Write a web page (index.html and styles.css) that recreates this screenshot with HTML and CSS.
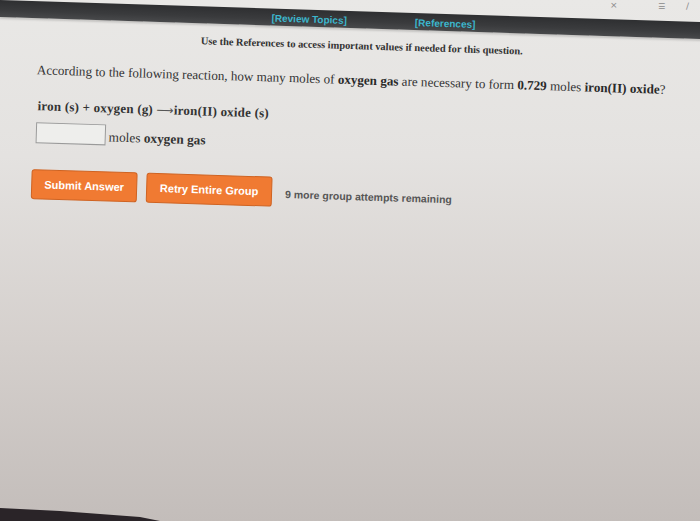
FILE: index.html
```html
<!DOCTYPE html>
<html>
<head>
<meta charset="utf-8">
<link rel="stylesheet" href="styles.css">
</head>
<body>
<div class="toolbar">
  <span class="tb-icon tb-a">&#x2A2F;</span>
  <span class="tb-icon tb-b">&#x2630;</span>
  <span class="tb-icon tb-c">&#x2215;</span>
</div>
<div class="page">
  <div class="bar">
    <a class="link link-review">[Review Topics]</a>
    <a class="link link-refs">[References]</a>
  </div>
  <p class="note">Use the References to access important values if needed for this question.</p>
  <div class="question">
    <p class="q">According to the following reaction, how many moles of <b>oxygen gas</b> are necessary to form <b>0.729</b> moles <b>iron(II) oxide</b>?</p>
    <p class="eq"><b>iron</b> (s) + <b>oxygen</b> (g) <span class="arrow">&#x27F6;</span><b>iron(II) oxide</b> (s)</p>
    <div class="answer">
      <span class="box"></span>
      <span class="unit">moles <b>oxygen gas</b></span>
    </div>
  </div>
  <div class="actions">
    <button class="btn btn-submit">Submit Answer</button>
    <button class="btn btn-retry">Retry Entire Group</button>
    <span class="remaining">9 more group attempts remaining</span>
  </div>
</div>
<svg class="bezel" width="160" height="20" viewBox="0 0 160 20"><polygon points="0,7 60,10 140,16 160,20 0,20" fill="#2a2428"/></svg>
</body>
</html>
```
FILE: styles.css
```css
html, body {
  margin: 0;
  padding: 0;
}
body {
  width: 700px;
  height: 521px;
  overflow: hidden;
  position: relative;
  background: linear-gradient(180deg, #e9e8e6 0%, #e4e2e0 30%, #d5d0cd 65%, #c3bdba 100%);
  font-family: "Liberation Serif", "Times New Roman", serif;
  color: #2b2b2b;
}
.toolbar {
  position: absolute;
  top: 0;
  right: 0;
  width: 130px;
  height: 20px;
}
.tb-icon {
  position: absolute;
  color: #8a8a8a;
  font-family: "DejaVu Sans", sans-serif;
  font-size: 9px;
  line-height: 10px;
}
.tb-a { left: 40px; top: 0; }
.tb-b { left: 88px; top: 2px; font-size: 8px; }
.tb-c { left: 116px; top: 1px; }
.page {
  width: 720px;
  transform: rotate(1.8deg);
  transform-origin: 0 0;
}
.bar {
  height: 17px;
  background: linear-gradient(180deg, #2e2f31 0%, #3a3b3d 60%, #48494b 100%);
  display: flex;
  align-items: flex-end;
  box-shadow: 0 2px 2px rgba(0,0,0,0.15);
}
.link {
  font-family: "Liberation Sans", Arial, sans-serif;
  font-weight: bold;
  font-size: 10px;
  line-height: 10px;
  color: #3cb6cc;
  margin-bottom: 2px;
}
.link-review { margin-left: 272px; }
.link-refs { margin-left: 68px; }
.note {
  margin: 12px 0 0 202px;
  font-size: 10.5px;
  font-weight: bold;
  letter-spacing: -0.05px;
  color: #333;
}
.question {
  padding-left: 39px;
}
.q {
  margin: 21px 0 0 0;
  font-size: 13.1px;
  color: #333;
}
.q b { color: #2a2a2a; }
.eq {
  margin: 20px 0 0 2px;
  font-size: 13px;
  font-weight: bold;
  letter-spacing: 0.2px;
  color: #333;
}
.arrow {
  font-family: "DejaVu Sans", sans-serif;
  font-weight: normal;
  font-size: 12px;
  color: #555;
}
.answer {
  display: flex;
  align-items: center;
  margin-top: 7px;
  margin-left: 1px;
}
.box {
  width: 68px;
  height: 19px;
  border: 1px solid #9a9a9a;
  background: #eeeeec;
  display: inline-block;
}
.unit {
  font-size: 13.3px;
  margin-left: 3px;
  margin-top: 6px;
  color: #333;
}
.actions {
  display: flex;
  align-items: center;
  margin-top: 26px;
  padding-left: 37px;
}
.btn {
  font-family: "Liberation Sans", Arial, sans-serif;
  font-weight: bold;
  font-size: 11px;
  color: #fff;
  background: #f07a32;
  border: 1px solid #cf6322;
  border-radius: 3px;
  height: 30px;
  padding: 0;
  margin: 0;
}
.btn-submit { width: 106px; }
.btn-retry { width: 126px; margin-left: 9px; }
.remaining {
  font-family: "Liberation Sans", Arial, sans-serif;
  font-weight: bold;
  font-size: 10.5px;
  color: #565656;
  margin-left: 13px;
  margin-top: 4px;
}
.bezel {
  position: absolute;
  left: 0;
  bottom: 0;
}
```
